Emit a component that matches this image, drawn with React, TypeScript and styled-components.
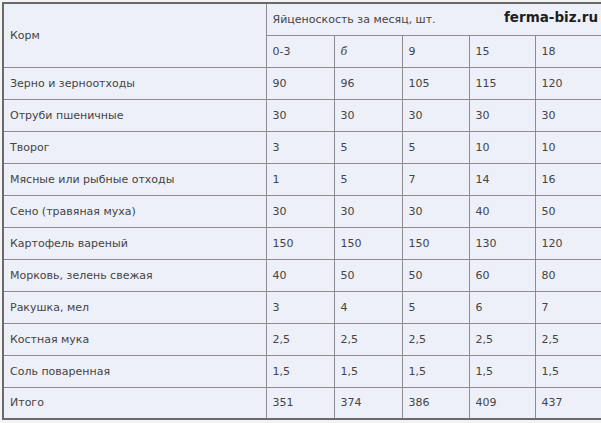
import React from 'react';
import styled, { createGlobalStyle } from 'styled-components';

const GlobalStyle = createGlobalStyle`
    html, body {
        margin: 0;
        padding: 0;
        background: #f3f3f5;
        overflow: hidden;
    }
`;

const Page = styled.div`
    padding: 2px 0 0 2px;
    width: 620px;
`;

const Table = styled.table`
    border-collapse: collapse;
    border: 2px solid #6a6a6a;
    background: #eef0f9;
    font-family: 'DejaVu Sans', Verdana, sans-serif;
    font-size: 11px;
    color: #444;
    table-layout: fixed;
`;

const Cell = styled.td<{ $width?: number }>`
    border: 1px solid #8c8c90;
    height: 32px;
    padding: 0 0 0 6px;
    box-sizing: border-box;
    vertical-align: middle;
    text-align: left;
    font-weight: normal;
    white-space: nowrap;
    width: ${p => (p.$width ? `${p.$width}px` : 'auto')};
`;

const HeadCell = styled(Cell).attrs({ as: 'th' })`
    position: relative;
`;

const Italic = styled.span`
    font-style: italic;
    font-family: 'DejaVu Serif', serif;
`;

const Watermark = styled.span`
    position: absolute;
    right: 4px;
    top: 5px;
    font-family: 'DejaVu Sans', Verdana, sans-serif;
    font-weight: bold;
    font-size: 13.5px;
    color: #1e1e1e;
`;

const months = ['0-3', '6', '9', '15', '18'];

const rows: [string, string[]][] = [
    ['Зерно и зерноотходы', ['90', '96', '105', '115', '120']],
    ['Отруби пшеничные', ['30', '30', '30', '30', '30']],
    ['Творог', ['3', '5', '5', '10', '10']],
    ['Мясные или рыбные отходы', ['1', '5', '7', '14', '16']],
    ['Сено (травяная муха)', ['30', '30', '30', '40', '50']],
    ['Картофель вареный', ['150', '150', '150', '130', '120']],
    ['Морковь, зелень свежая', ['40', '50', '50', '60', '80']],
    ['Ракушка, мел', ['3', '4', '5', '6', '7']],
    ['Костная мука', ['2,5', '2,5', '2,5', '2,5', '2,5']],
    ['Соль поваренная', ['1,5', '1,5', '1,5', '1,5', '1,5']],
    ['Итого', ['351', '374', '386', '409', '437']],
];

const widths = [263, 68, 68, 67, 66, 68];

export default function App() {
    return (
        <Page>
            <GlobalStyle />
            <Table>
                <thead>
                    <tr>
                        <HeadCell rowSpan={2} $width={widths[0]}>
                            Корм
                        </HeadCell>
                        <HeadCell colSpan={5}>
                            Яйценоскость за месяц, шт.
                            <Watermark>ferma-biz.ru</Watermark>
                        </HeadCell>
                    </tr>
                    <tr>
                        {months.map((m, i) => (
                            <HeadCell key={m} $width={widths[i + 1]}>
                                {m === '6' ? <Italic>б</Italic> : m}
                            </HeadCell>
                        ))}
                    </tr>
                </thead>
                <tbody>
                    {rows.map(([name, values]) => (
                        <tr key={name}>
                            <Cell>{name}</Cell>
                            {values.map((v, i) => (
                                <Cell key={i}>{v}</Cell>
                            ))}
                        </tr>
                    ))}
                </tbody>
            </Table>
        </Page>
    );
}
